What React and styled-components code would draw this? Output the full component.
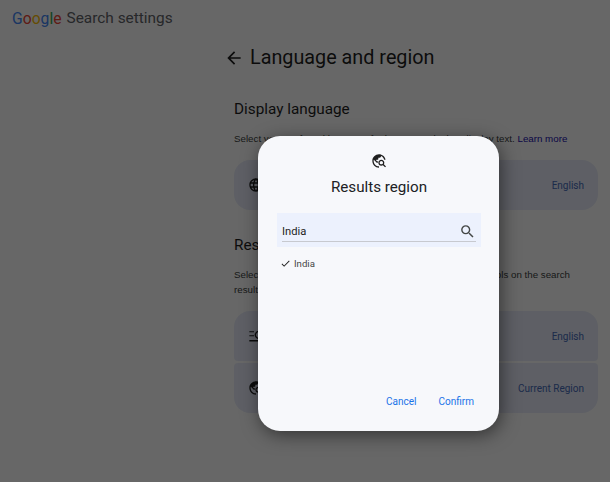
import styled, { createGlobalStyle } from "styled-components"

const GlobalStyle = createGlobalStyle`
    html, body {
        margin: 0;
        height: 100%;
        overflow: hidden;
        background: #fff;
    }
    * {
        box-sizing: border-box;
    }
`

const headingFont = `Roboto, "Liberation Sans", sans-serif`
const bodyFont = `"Liberation Sans", Arial, sans-serif`

const Page = styled.div`
    width: 610px;
    height: 482px;
    position: relative;
    overflow: hidden;
    font-family: ${bodyFont};
    color: #1f1f1f;
`

const Header = styled.header`
    display: flex;
    align-items: center;
    gap: 5px;
    height: 36px;
    padding-left: 12px;
    font-family: ${headingFont};
`

const Logo = styled.span`
    font-size: 15.7px;
`

const Letter = styled.span`
    color: ${p => p.$color};
`

const HeaderTitle = styled.span`
    font-size: 15.4px;
    color: #5f6368;
`

const Main = styled.main`
    margin-left: 227px;
    width: 371px;
    padding-top: 8px;
`

const TitleRow = styled.div`
    display: flex;
    align-items: center;
    gap: 6px;
    height: 28px;
    margin-left: -3px;
`

const Title = styled.h1`
    margin: 0;
    font: 400 19.8px/28px ${headingFont};
`

const Section = styled.section`
    padding-left: 7px;
    margin-top: ${p => p.$top}px;
`

const SectionTitle = styled.h2`
    margin: 0;
    font: 400 15.3px/22px ${headingFont};
`

const Description = styled.p`
    margin: 11px 0 14px;
    font-size: 9.75px;
    line-height: 15px;
    color: #3c3f3e;
    width: 345px;

    a {
        color: #1a0dab;
        text-decoration: none;
    }
`

const Card = styled.div`
    display: flex;
    align-items: center;
    justify-content: space-between;
    height: 50px;
    padding: 0 14px;
    background: #e8ecf9;
    border-radius: ${p => p.$radius};
    margin-bottom: 2px;
    font: 400 10px ${headingFont};
`

const CardValue = styled.span`
    color: #466ab8;
`

const Icon = styled.svg`
    display: block;
    flex: none;
    width: ${p => p.$size}px;
    height: ${p => p.$size}px;
    fill: ${p => p.$color || "#1f1f1f"};
`

const Scrim = styled.div`
    position: absolute;
    inset: 0;
    background: rgba(0, 0, 0, 0.595);
`

const Modal = styled.div`
    position: absolute;
    left: 258px;
    top: 136px;
    width: 241px;
    height: 295px;
    display: flex;
    flex-direction: column;
    align-items: center;
    padding: 17px 18px 21px 19px;
    background: #f7f8fb;
    border-radius: 22px;
    box-shadow: 2px 4px 18px rgba(0, 0, 0, 0.5);
`

const ModalTitle = styled.h2`
    margin: 6px 0 0;
    font: 400 15.2px/24px ${headingFont};
    color: #202124;
`

const SearchBox = styled.div`
    align-self: stretch;
    margin-top: 14px;
    height: 34px;
    padding: 0 5px;
    background: #ecf1fd;
`

const SearchInner = styled.div`
    display: flex;
    align-items: center;
    justify-content: space-between;
    height: 29px;
    padding-top: 8px;
    border-bottom: 1px solid #c7c9cf;
    font: 400 11.2px ${headingFont};
`

const Option = styled.div`
    align-self: stretch;
    display: flex;
    align-items: center;
    gap: 3px;
    margin-top: 8px;
    padding-left: 3px;
    height: 16px;
    font: 400 9.6px ${headingFont};
    color: #444746;
`

const Actions = styled.div`
    align-self: stretch;
    margin-top: auto;
    display: flex;
    justify-content: flex-end;
    gap: 22px;
    padding-right: 7px;
`

const TextButton = styled.button`
    border: 0;
    padding: 0;
    background: none;
    font: 400 10px/16px ${headingFont};
    color: #1a73e8;
`

const paths = {
    back: "M20 11H7.83l5.59-5.59L12 4l-8 8 8 8 1.41-1.41L7.83 13H20v-2z",
    globe: "M11.99 2C6.47 2 2 6.48 2 12s4.47 10 9.99 10C17.52 22 22 17.52 22 12S17.52 2 11.99 2zm6.93 6h-2.95c-.32-1.25-.78-2.45-1.38-3.56 1.84.63 3.37 1.91 4.33 3.56zM12 4.04c.83 1.2 1.48 2.53 1.91 3.96h-3.82c.43-1.43 1.08-2.76 1.91-3.96zM4.26 14C4.1 13.36 4 12.69 4 12s.1-1.36.26-2h3.38c-.08.66-.14 1.32-.14 2 0 .68.06 1.34.14 2H4.26zm.82 2h2.95c.32 1.25.78 2.45 1.38 3.56-1.84-.63-3.37-1.9-4.33-3.56zm2.95-8H5.08c.96-1.66 2.49-2.93 4.33-3.56C8.81 5.55 8.35 6.75 8.03 8zM12 19.96c-.83-1.2-1.48-2.53-1.91-3.96h3.82c-.43 1.43-1.08 2.76-1.91 3.96zM14.34 14H9.66c-.09-.66-.16-1.32-.16-2 0-.68.07-1.35.16-2h4.68c.09.65.16 1.32.16 2 0 .68-.07 1.34-.16 2zm.25 5.56c.6-1.11 1.06-2.31 1.38-3.56h2.95c-.96 1.65-2.49 2.93-4.33 3.56zM16.36 14c.08-.66.14-1.32.14-2 0-.68-.06-1.34-.14-2h3.38c.16.64.26 1.31.26 2s-.1 1.36-.26 2h-3.38z",
    explore: "M19.3 16.9c.4-.7.7-1.5.7-2.4 0-2.5-2-4.5-4.5-4.5S11 12 11 14.5s2 4.5 4.5 4.5c.9 0 1.7-.3 2.4-.7l3.2 3.2 1.4-1.4-3.2-3.2zm-3.8.1c-1.4 0-2.5-1.1-2.5-2.5s1.1-2.5 2.5-2.5 2.5 1.1 2.5 2.5-1.1 2.5-2.5 2.5zM12 20v2C6.48 22 2 17.52 2 12S6.48 2 12 2c4.84 0 8.87 3.44 9.8 8h-2.07c-.64-2.46-2.4-4.47-4.73-5.41V5c0 1.1-.9 2-2 2h-2v2c0 .55-.45 1-1 1H8v2h2v3H9l-4.79-4.79C4.08 10.79 4 11.38 4 12c0 4.41 3.59 8 8 8z",
    search: "M15.5 14h-.79l-.28-.27A6.471 6.471 0 0 0 16 9.5 6.5 6.5 0 1 0 9.5 16c1.61 0 3.09-.59 4.23-1.57l.27.28v.79l5 4.99L20.49 19l-4.99-5zm-6 0C7.01 14 5 11.99 5 9.5S7.01 5 9.5 5 14 7.01 14 9.5 11.99 14 9.5 14z",
    check: "M9 16.17L4.83 12l-1.42 1.41L9 19 21 7l-1.41-1.41z",
    lines: "M2 5h7v1.5H2zM2 11h7v1.5H2zM2 18h20v2.2H2zM16 4c-3 0-6 3-6 6.5s3 6 6 6v-2c-2 0-4-2-4-4s2-4.5 4-4.5z",
}

const Glyph = ({ name, size, color }) => (
    <Icon viewBox="0 0 24 24" $size={size} $color={color}>
        <path d={paths[name]} />
    </Icon>
)

const logoLetters = [
    ["G", "#4285f4"],
    ["o", "#ea4335"],
    ["o", "#fbbc05"],
    ["g", "#4285f4"],
    ["l", "#34a853"],
    ["e", "#ea4335"],
]

const App = () => {
    return (
        <Page>
            <GlobalStyle />
            <Header>
                <Logo>
                    {logoLetters.map(([l, c], i) => (
                        <Letter key={i} $color={c}>{l}</Letter>
                    ))}
                </Logo>
                <HeaderTitle>Search settings</HeaderTitle>
            </Header>
            <Main>
                <TitleRow>
                    <Glyph name="back" size={20} />
                    <Title>Language and region</Title>
                </TitleRow>
                <Section $top={26}>
                    <SectionTitle>Display language</SectionTitle>
                    <Description>
                        Select your preferred language for buttons and other display text. <a href="#">Learn more</a>
                    </Description>
                    <Card $radius="16px">
                        <Glyph name="globe" size={16} />
                        <CardValue>English</CardValue>
                    </Card>
                </Section>
                <Section $top={24}>
                    <SectionTitle>Results language and region</SectionTitle>
                    <Description>
                        Select the language and regions you prefer for results and tools on the search results page.
                    </Description>
                    <Card $radius="16px 16px 4px 4px">
                        <Glyph name="lines" size={16} />
                        <CardValue>English</CardValue>
                    </Card>
                    <Card $radius="4px 4px 16px 16px">
                        <Glyph name="explore" size={16} />
                        <CardValue>Current Region</CardValue>
                    </Card>
                </Section>
            </Main>
            <Scrim />
            <Modal>
                <Glyph name="explore" size={16} />
                <ModalTitle>Results region</ModalTitle>
                <SearchBox>
                    <SearchInner>
                        India
                        <Glyph name="search" size={17} color="#444746" />
                    </SearchInner>
                </SearchBox>
                <Option>
                    <Glyph name="check" size={11} />
                    India
                </Option>
                <Actions>
                    <TextButton>Cancel</TextButton>
                    <TextButton>Confirm</TextButton>
                </Actions>
            </Modal>
        </Page>
    )
}

export default App
